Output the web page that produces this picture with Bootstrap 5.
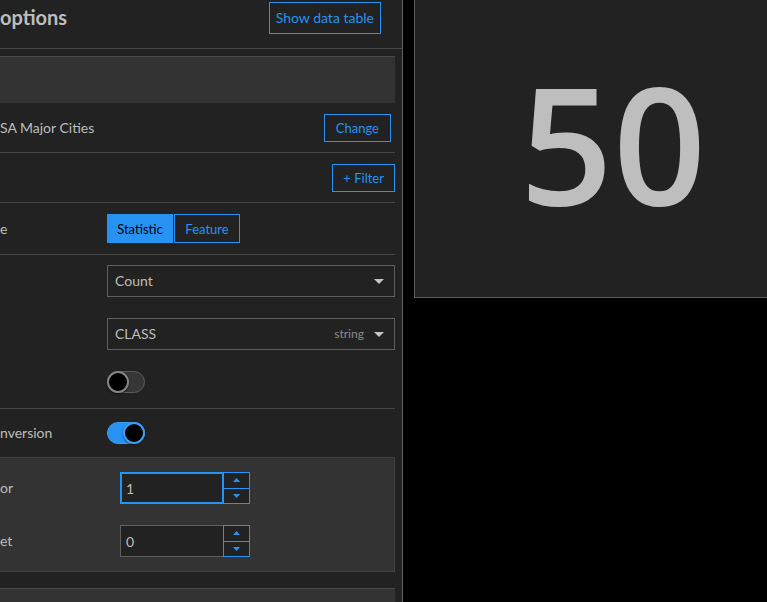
<!DOCTYPE html>
<html lang="en" data-bs-theme="dark">
<head>
<meta charset="utf-8">
<meta name="viewport" content="width=device-width, initial-scale=1">
<title>Data options</title>
<link href="https://cdn.jsdelivr.net/npm/bootstrap@5.3.0/dist/css/bootstrap.min.css" rel="stylesheet">
<style>
:root { --accent: #2693f2; --panel: #222; --raised: #333; --rule: #474747; --field: #5f5f5f; --ink: #bdbdbd; }
body { background: #000; color: var(--ink); font: 14px/20px Lato, sans-serif; }
.workspace { gap: 11px; height: 100vh; }
.settings { flex: 403 1 0; min-width: 0; background: var(--panel); border-right: 1px solid var(--field); }
.preview { flex: 353 1 0; min-width: 0; height: 298px; background: var(--panel); border: solid var(--field); border-width: 0 0 1px 1px; }
.figure-value { margin-left: 44px; font: 600 163px/284px "Open Sans", sans-serif; color: #bebebe; }
.settings-header { height: 49px; padding: 2px 21px 0 0; border-bottom: 1px solid var(--rule); }
.settings-header h1 { font-size: 20px; line-height: 30px; font-weight: 700; margin: 0; color: var(--ink); }
.settings-body { margin: 7px 7px 0 0; }
.section-bar { height: 47px; background: var(--raised); border-top: 1px solid var(--rule); }
.option-row { min-height: 50px; border-bottom: 1px solid var(--rule); }
.type-row { min-height: 52px; }
.conversion-row { min-height: 48px; }
.option-label { width: 107px; flex: none; }
.btn-line { --bs-btn-color: var(--accent); --bs-btn-border-color: var(--accent); --bs-btn-hover-color: #000; --bs-btn-hover-bg: var(--accent); --bs-btn-active-bg: var(--accent); --bs-btn-active-color: #000; --bs-btn-active-border-color: var(--accent); --bs-btn-border-radius: 0; --bs-btn-font-size: 13px; --bs-btn-line-height: 20px; --bs-btn-padding-y: 3px; --bs-btn-padding-x: 10px; white-space: nowrap; }
.btn-tall { --bs-btn-font-size: 14px; --bs-btn-padding-y: 5px; --bs-btn-padding-x: 6px; min-width: 112px; }
.btn-change { --bs-btn-padding-x: 11px; }
.mode-btn { width: 66px; --bs-btn-padding-x: 0; height: 29px; }
.mode-group { gap: 1px; }
.field-select { height: 32px; padding: 0 30px 0 7px; font-size: 14px; line-height: 20px; color: var(--ink); border: 1px solid var(--field); border-radius: 0; background: var(--panel) url("data:image/svg+xml,%3Csvg xmlns='http://www.w3.org/2000/svg' viewBox='0 0 10 5'%3E%3Cpath fill='%23c4c4c4' d='M0 0h10L5 5z'/%3E%3C/svg%3E") no-repeat right 10px center / 10px 5px; }
.field-type { right: 31px; top: 6px; font-size: 12px; color: #8c8c8c; pointer-events: none; }
.toggle { appearance: none; display: block; width: 38px; height: 22px; margin: 0; border: 1px solid #5a5a5a; border-radius: 11px; background: #363636; }
.toggle::before { content: ""; display: block; width: 22px; height: 22px; margin: -1px; border: 2px solid #858585; border-radius: 50%; background: #000; box-shadow: 0 1px 2px #0008; }
.toggle:checked { background: var(--accent); border-color: #3b9ff5; }
.toggle:checked::before { margin-left: 15px; border-color: #3b9ff5; }
.stat-fields { padding: 10px 0 15px; border-bottom: 1px solid var(--rule); }
.stat-fields > div + div { margin-top: 21px; }
.factor-box { padding: 14px 0; background: var(--raised); border: solid #414141; border-width: 1px 1px 1px 0; }
.factor-box .option-label { width: 120px; }
.factor-box > div + div { margin-top: 21px; }
.number-input { width: 104px; height: 32px; padding: 0 5px; background: var(--panel); border: 1px solid var(--field); color: var(--ink); border-radius: 0; }
.number-input.is-current { border: 2px solid var(--accent); padding: 0 4px; }
.stepper { width: 27px; height: 32px; margin-left: -1px; border: 1px solid var(--accent); }
.stepper button { flex: 1; border: 0; padding: 0; background: var(--panel); }
.stepper button + button { border-top: 1px solid var(--accent); }
.stepper svg { display: block; width: 7px; height: 4px; margin: auto; fill: var(--accent); }
</style>
</head>
<body>
<div class="workspace d-flex align-items-start">
  <main class="settings h-100 overflow-hidden">
    <header class="settings-header d-flex align-items-start justify-content-between">
      <h1>options</h1>
      <button type="button" class="btn btn-line btn-tall">Show data table</button>
    </header>
    <div class="settings-body">
      <div class="section-bar"></div>
      <div class="option-row d-flex align-items-center justify-content-between">
        <span>SA Major Cities</span>
        <button type="button" class="btn btn-line btn-change me-1">Change</button>
      </div>
      <div class="option-row d-flex align-items-center justify-content-end">
        <button type="button" class="btn btn-line">+ Filter</button>
      </div>
      <div class="option-row type-row d-flex align-items-center">
        <span class="option-label" id="type-label">e</span>
        <div class="mode-group d-flex" role="group" aria-labelledby="type-label">
          <button type="button" class="btn btn-line mode-btn active" aria-pressed="true">Statistic</button>
          <button type="button" class="btn btn-line mode-btn" aria-pressed="false">Feature</button>
        </div>
      </div>
      <div class="stat-fields">
        <div class="d-flex">
          <span class="option-label"></span>
          <select class="form-select field-select" aria-label="Statistic"><option>Count</option></select>
        </div>
        <div class="d-flex">
          <span class="option-label"></span>
          <div class="position-relative flex-fill">
            <select class="form-select field-select" aria-label="Field"><option>CLASS</option></select>
            <span class="field-type position-absolute">string</span>
          </div>
        </div>
        <div class="d-flex">
          <span class="option-label"></span>
          <input type="checkbox" role="switch" class="toggle" aria-label="Unique values">
        </div>
      </div>
      <div class="conversion-row d-flex align-items-center">
        <label class="option-label" for="conversion">nversion</label>
        <input type="checkbox" role="switch" class="toggle" id="conversion" checked>
      </div>
      <div class="factor-box">
        <div class="d-flex align-items-center">
          <label class="option-label" for="factor">or</label>
          <input type="text" inputmode="decimal" id="factor" class="number-input is-current" value="1">
          <div class="stepper d-flex flex-column">
            <button type="button" aria-label="Increase factor"><svg viewBox="0 0 7 4"><path d="M0 4h7L3.500 0z"/></svg></button>
            <button type="button" aria-label="Decrease factor"><svg viewBox="0 0 7 4"><path d="M0 0h7L3.500 4z"/></svg></button>
          </div>
        </div>
        <div class="d-flex align-items-center">
          <label class="option-label" for="offset">et</label>
          <input type="text" inputmode="decimal" id="offset" class="number-input" value="0">
          <div class="stepper d-flex flex-column">
            <button type="button" aria-label="Increase offset"><svg viewBox="0 0 7 4"><path d="M0 4h7L3.500 0z"/></svg></button>
            <button type="button" aria-label="Decrease offset"><svg viewBox="0 0 7 4"><path d="M0 0h7L3.500 4z"/></svg></button>
          </div>
        </div>
      </div>
      <div class="section-bar mt-3"></div>
    </div>
  </main>
  <section class="preview text-center overflow-hidden" aria-label="Preview">
    <div class="figure-value">50</div>
  </section>
</div>
<script src="https://cdn.jsdelivr.net/npm/bootstrap@5.3.0/dist/js/bootstrap.bundle.min.js"></script>
</body>
</html>
